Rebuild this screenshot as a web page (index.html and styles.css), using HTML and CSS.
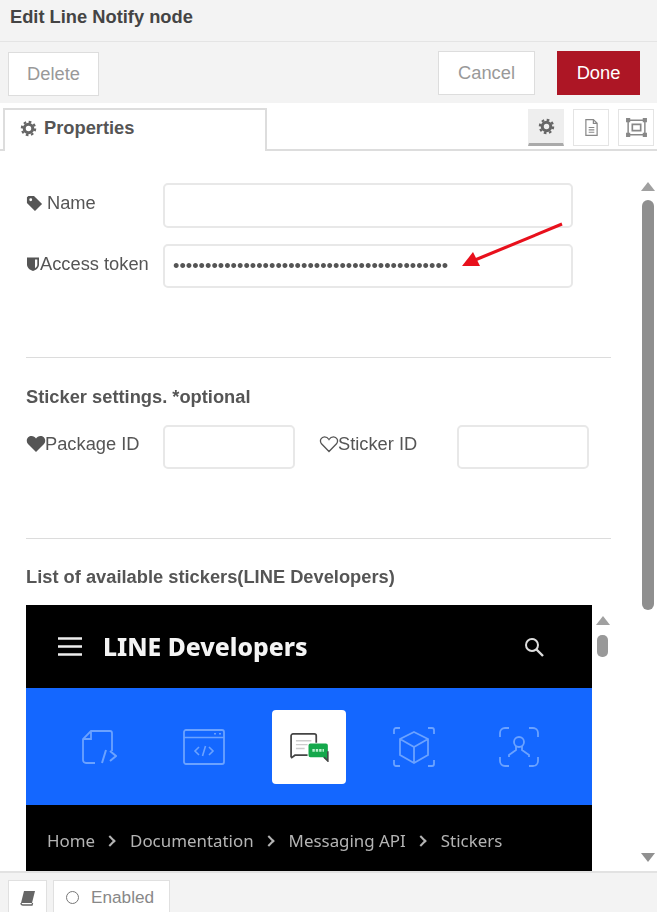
FILE: index.html
```html
<!DOCTYPE html>
<html lang="en">
<head>
<meta charset="utf-8">
<title>Edit Line Notify node</title>
<link rel="stylesheet" href="styles.css">
</head>
<body>
<div class="tray">
  <header class="tray-title">Edit Line Notify node</header>
  <div class="toolbar">
    <button class="btn btn-delete">Delete</button>
    <div class="toolbar-right">
      <button class="btn btn-cancel">Cancel</button>
      <button class="btn btn-done">Done</button>
    </div>
  </div>
  <div class="tabs">
    <div class="tab">
      <svg class="ico-gear" viewBox="0 0 20 20"><circle cx="10" cy="10" r="5" fill="none" stroke="#666" stroke-width="3.6"/><circle cx="10" cy="10" r="7.8" fill="none" stroke="#666" stroke-width="2.6" stroke-dasharray="3.1 3.03"/></svg>
      <span>Properties</span>
    </div>
    <div class="tab-icons">
      <div class="tab-icon tab-icon-active"><svg class="ico-gear" viewBox="0 0 20 20"><circle cx="10" cy="10" r="5" fill="none" stroke="#666" stroke-width="3.6"/><circle cx="10" cy="10" r="7.8" fill="none" stroke="#666" stroke-width="2.6" stroke-dasharray="3.1 3.03"/></svg></div>
      <div class="tab-icon"><svg class="ico-doc" viewBox="0 0 16 20"><path d="M2 1.5h8l4 4v13H2z M10 1.5v4h4" fill="none" stroke="#888" stroke-width="1.3"/><path d="M5 10h6M5 12.5h6M5 15h6" stroke="#888" stroke-width="1.2"/></svg></div>
      <div class="tab-icon"><svg class="ico-frame" viewBox="0 0 22 20"><path d="M3 3h16v14H3z" fill="none" stroke="#888" stroke-width="1.4"/><path d="M7 7h8v6H7z" fill="none" stroke="#888" stroke-width="1.6"/><path d="M1 1h4v4H1zM17 1h4v4h-4zM1 15h4v4H1zM17 15h4v4h-4z" fill="#888"/></svg></div>
    </div>
  </div>

  <div class="main">
    <div class="form">
      <div class="row row-name">
        <label class="label"><svg class="ico-tag" viewBox="0 0 18 18"><path d="M1 2.5 2.5 1h6L17 9.5 9.5 17 1 8.5z" fill="#555"/><circle cx="5" cy="5" r="1.5" fill="#fff"/></svg>Name</label>
        <input class="input input-wide" type="text">
      </div>
      <div class="row row-token">
        <label class="label"><svg class="ico-shield" viewBox="0 0 14 16"><path d="M1 1.5h12v7c0 3.500-3 5.500-6 6.500-3-1-6-3-6-6.500z" fill="#555"/><path d="M9 3.500h2.300v5c0 1.800-1 3-2.300 3.800z" fill="#fff"/></svg>Access token</label>
        <input class="input input-wide input-token" type="password" value="abcdefghijklmnopqrstuvwxyzabcdefghijklmnopq">
        <svg class="arrow" viewBox="0 0 104 48"><path d="M101 3 14 39" stroke="#e8101c" stroke-width="3" fill="none"/><path d="M1 45 12 31l7 14z" fill="#e8101c"/></svg>
      </div>
      <hr class="rule rule-first">
      <h3 class="heading heading-sticker">Sticker settings. *optional</h3>
      <div class="row row-sticker">
        <label class="label"><svg class="ico-heart" viewBox="0 0 20 18"><path d="M10 17 2 9C-1 5 2 1 5.500 1 7.500 1 9 2 10 3.500 11 2 12.500 1 14.500 1 18 1 21 5 18 9z" fill="#555"/></svg>Package ID</label>
        <input class="input input-small" type="text">
        <label class="label label-sticker"><svg class="ico-heart" viewBox="0 0 20 18"><path d="M10 16.500 2.500 8.800C0 5.500 2.500 1.800 5.500 1.800 7.500 1.800 9 3 10 4.500 11 3 12.500 1.800 14.500 1.800 17.500 1.800 20 5.500 17.500 8.800z" fill="none" stroke="#555" stroke-width="1.300"/></svg>Sticker ID</label>
        <input class="input input-small" type="text">
      </div>
      <hr class="rule rule-second">
      <h3 class="heading heading-list">List of available stickers(LINE Developers)</h3>
      <div class="embed-wrap">
        <div class="embed">
          <div class="embed-top">
            <svg class="ico-menu" viewBox="0 0 24 19"><path d="M0 1.500h24M0 9.500h24M0 17.500h24" stroke="#eee" stroke-width="2.400"/></svg>
            <span class="brand">LINE Developers</span>
            <svg class="ico-search" viewBox="0 0 20 20"><circle cx="8" cy="8" r="6" fill="none" stroke="#ddd" stroke-width="2"/><path d="M12.500 12.500 19 19" stroke="#ddd" stroke-width="2.400"/></svg>
          </div>
          <div class="embed-nav">
            <div class="nav-cell"><svg class="ico-nav-doc" viewBox="0 0 36 36"><path d="M14 34H5a3 3 0 0 1-3-3V10l8-8h19a2 2 0 0 1 2 2v18M10 2v8H2" fill="none" stroke="#6ba2ff" stroke-width="1.800"/><path d="M21 34l4-13M29 22l6 5-6 5" fill="none" stroke="#6ba2ff" stroke-width="2"/></svg></div>
            <div class="nav-cell"><svg class="ico-nav-win" viewBox="0 0 42 36"><rect x="1" y="1" width="40" height="34" rx="2" fill="none" stroke="#6ba2ff" stroke-width="1.800"/><path d="M1 8.500h40" stroke="#6ba2ff" stroke-width="1.600"/><path d="M31 4.800h2M36 4.800h2" stroke="#6ba2ff" stroke-width="1.600"/><path d="M16 18l-4 4 4 4M26 18l4 4-4 4M22.500 17l-3 10" fill="none" stroke="#6ba2ff" stroke-width="1.600"/></svg></div>
            <div class="nav-card"><svg class="ico-nav-msg" viewBox="0 0 42 31"><path d="M3 26V4a2 2 0 0 1 2-2h22a2 2 0 0 1 2 2v7M20 24H7l-4 3" fill="none" stroke="#444" stroke-width="1.800"/><path d="M8 9h16M8 13h12M8 17h9" stroke="#ccc" stroke-width="1.400"/><path d="M23 12h16a2 2 0 0 1 2 2v16l-5-4H23a2 2 0 0 1-2-2V14a2 2 0 0 1 2-2z" fill="#14a84b"/><path d="M37 26l4 4V20" fill="none" stroke="#444" stroke-width="1.600"/><path d="M25 19h12" stroke="#b8f0cb" stroke-width="3" stroke-dasharray="2.500 1"/></svg></div>
            <div class="nav-cell"><svg class="ico-nav-cube" viewBox="0 0 42 40"><path d="M1 7V3a2 2 0 0 1 2-2h4M35 1h4a2 2 0 0 1 2 2v4M41 33v4a2 2 0 0 1-2 2h-4M7 39H3a2 2 0 0 1-2-2v-4" fill="none" stroke="#6ba2ff" stroke-width="1.800"/><path d="M21 5 35 12V28L21 36 7 28V12zM7 12l14 8 14-8M21 20v16" fill="none" stroke="#6ba2ff" stroke-width="1.800"/></svg></div>
            <div class="nav-cell"><svg class="ico-nav-user" viewBox="0 0 40 40"><path d="M1 10V6a5 5 0 0 1 5-5h4M30 1h4a5 5 0 0 1 5 5v4M39 30v4a5 5 0 0 1-5 5h-4M10 39H6a5 5 0 0 1-5-5v-4" fill="none" stroke="#6ba2ff" stroke-width="1.800"/><circle cx="20" cy="15" r="5" fill="none" stroke="#6ba2ff" stroke-width="1.800"/><path d="M17 19v4l-7 5v2M23 19v4l7 5v2" fill="none" stroke="#6ba2ff" stroke-width="1.800"/></svg></div>
          </div>
          <div class="embed-crumbs">
            <span>Home</span><i class="sep"></i><span>Documentation</span><i class="sep"></i><span>Messaging API</span><i class="sep"></i><span>Stickers</span>
          </div>
        </div>
        <div class="inner-scroll">
          <i class="tri-up"></i>
          <i class="inner-thumb"></i>
        </div>
      </div>
    </div>
    <div class="scrollbar">
      <i class="tri-up"></i>
      <i class="outer-thumb"></i>
      <i class="tri-down"></i>
    </div>
  </div>

  <footer class="footer">
    <div class="foot-btn foot-book"><svg class="ico-book" viewBox="0 0 16 16"><path d="M4 1h11l-3 12H1z" fill="#666"/><path d="M1 13c0 2 1 2 2 2h9l.6-2" fill="none" stroke="#666" stroke-width="1.300"/></svg></div>
    <div class="foot-btn foot-enabled"><i class="ring"></i><span>Enabled</span></div>
  </footer>
</div>
</body>
</html>
```
FILE: styles.css
```css
* { box-sizing: border-box; }
html, body { margin: 0; padding: 0; }
body { width: 657px; height: 912px; overflow: hidden; background: #fff; font-family: "Liberation Sans", Arial, sans-serif; color: #555; }
.tray { width: 657px; height: 912px; display: flex; flex-direction: column; filter: blur(0.45px); }
svg { display: block; flex: none; }
i { display: block; }

.tray-title { height: 42px; padding: 6px 10px 0; background: #f3f3f3; border-bottom: 1px solid #e4e4e4; font-size: 18.3px; line-height: 21px; font-weight: 700; color: #444; }
.toolbar { height: 61px; padding: 9px 17px 0 8px; background: #f3f3f3; display: flex; justify-content: space-between; align-items: flex-start; }
.toolbar-right { display: flex; gap: 22px; }
.btn { height: 44px; font: 18.3px "Liberation Sans", Arial, sans-serif; border: 1px solid #ddd; background: #fff; color: #999; padding: 0; }
.btn-delete { width: 91px; margin-top: 1px; }
.btn-cancel { width: 97px; }
.btn-done { width: 83px; background: #ad1625; border-color: #ad1625; color: #fff; }

.tabs { height: 48px; padding: 5px 3px 0 3px; background: #fff; border-bottom: 2px solid #ddd; display: flex; justify-content: space-between; }
.tab { width: 264px; height: 43px; padding: 0 0 5px 15px; background: #fff; border: 2px solid #ddd; border-bottom: 0; display: flex; align-items: center; gap: 7px; font-size: 18.3px; font-weight: 700; color: #555; }
.ico-gear { width: 17px; height: 17px; }
.tab-icons { display: flex; gap: 9px; margin-top: 1px; }
.tab-icon { width: 36px; height: 37px; border: 1px solid #e4e4e4; display: flex; align-items: center; justify-content: center; }
.tab-icon-active { background: #eee; border-color: #eee; border-bottom: 3px solid #aaa; }
.ico-doc { width: 15px; height: 19px; }
.ico-frame { width: 23px; height: 21px; }

.main { flex: 1; min-height: 0; display: flex; justify-content: space-between; overflow: hidden; }
.form { width: 611px; padding: 32px 0 0 26px; }
.row { display: flex; align-items: flex-start; }
.row-token { position: relative; margin-top: 16px; }
.row-sticker .label { height: 38px; }
.label { width: 137px; height: 40px; display: flex; align-items: center; font-size: 18.3px; color: #555; }
.label-sticker { width: 138px; margin-left: 24px; }
.input { display: block; height: 45px; border: 2px solid #e8e8e8; border-radius: 5px; background: #fff; padding: 0 8px; font: 18.3px "Liberation Sans", Arial, sans-serif; color: #555; outline: 0; }
.input-wide { width: 410px; }
.input-token { height: 44px; }
.input-small { width: 132px; height: 44px; }
.arrow { position: absolute; left: 435px; top: -23px; width: 104px; height: 48px; }
.ico-tag { width: 17px; height: 17px; margin-right: 4px; }
.ico-shield { width: 14px; height: 16px; }
.ico-heart { width: 20px; height: 18px; margin-right: -1px; }

.rule { width: 585px; height: 1px; margin: 0; border: 0; background: #dcdcdc; }
.rule-first { margin-top: 69px; }
.rule-second { margin-top: 69px; }
.heading { margin: 0; font-size: 18.3px; line-height: 21px; font-weight: 700; color: #555; }
.heading-sticker { margin-top: 28px; margin-bottom: 18px; }
.heading-list { margin-top: 27px; margin-bottom: 18px; }

.embed-wrap { display: flex; align-items: flex-start; width: 585px; }
.embed { width: 566px; height: 266px; background: #000; flex: none; }
.embed-top { height: 83px; padding: 0 48px 0 32px; display: flex; align-items: center; }
.ico-menu { width: 24px; height: 19px; margin-right: 21px; }
.brand { font: 800 24.700px "Noto Sans", sans-serif; color: #f4f4f4; flex: 1; }
.ico-search { width: 20px; height: 20px; }
.embed-nav { height: 117px; background: #1467ff; padding-left: 20px; display: grid; grid-template-columns: repeat(5, 105px); align-items: center; justify-items: center; }
.nav-cell { display: flex; }
.nav-card { width: 74px; height: 74px; border-radius: 4px; background: #fff; display: flex; align-items: center; justify-content: center; }
.ico-nav-doc { width: 36px; height: 36px; }
.ico-nav-win { width: 42px; height: 36px; }
.ico-nav-msg { width: 41px; height: 30px; }
.ico-nav-cube { width: 42px; height: 40px; }
.ico-nav-user { width: 40px; height: 40px; }
.embed-crumbs { height: 66px; padding: 5px 0 0 21px; display: flex; align-items: center; font: 16.900px "Noto Sans", sans-serif; color: #b4b4b4; }
.sep { width: 8px; height: 8px; margin: 0 16px 0 11px; border-top: 2px solid #b4b4b4; border-right: 2px solid #b4b4b4; transform: rotate(45deg); }

.inner-scroll { width: 19px; padding: 11px 0 0 4px; display: flex; flex-direction: column; gap: 10px; }
.tri-up { width: 0; height: 0; border-left: 7px solid transparent; border-right: 7px solid transparent; border-bottom: 9px solid #a0a0a0; }
.tri-down { width: 0; height: 0; border-left: 7px solid transparent; border-right: 7px solid transparent; border-top: 9px solid #909090; }
.inner-thumb { width: 11px; height: 22px; margin-left: 1px; border-radius: 5px; background: #999; }

.scrollbar { width: 16px; padding-top: 31px; display: flex; flex-direction: column; align-items: flex-start; }
.outer-thumb { width: 12px; height: 410px; margin: 9px 0 243px 1px; border-radius: 6px; background: #8f8f8f; }

.footer { height: 41px; background: #f3f3f3; border-top: 2px solid #e2e2e2; padding: 7px 0 0 8px; display: flex; gap: 6px; align-items: flex-start; }
.foot-btn { height: 32px; padding-top: 2px; background: #fff; border: 1px solid #e0e0e0; border-bottom: 0; display: flex; align-items: center; }
.foot-book { width: 39px; justify-content: center; }
.ico-book { width: 16px; height: 16px; }
.foot-enabled { width: 117px; padding-left: 12px; gap: 12px; font-size: 17.200px; color: #888; }
.ring { width: 13px; height: 13px; border-radius: 50%; border: 1.500px solid #777; }
```
